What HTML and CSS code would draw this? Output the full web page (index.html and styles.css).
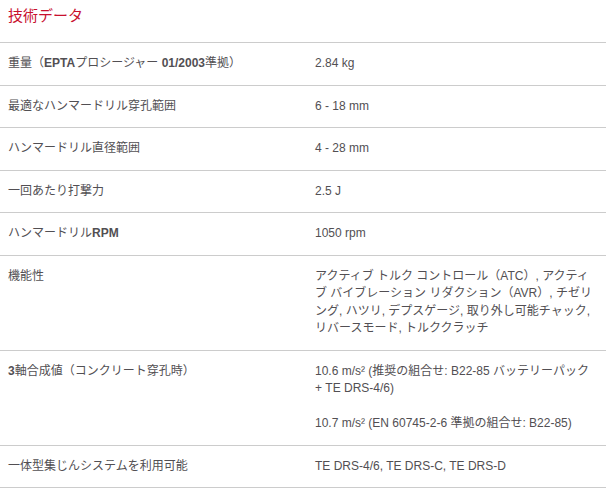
FILE: index.html
```html
<!DOCTYPE html>
<html lang="ja">
<head>
<meta charset="utf-8">
<title>技術データ</title>
<link rel="stylesheet" href="styles.css">
</head>
<body>
<h2 class="title">技術データ</h2>
<table class="specs">
  <tr><th>重量（<b>EPTA</b>プロシージャー <b>01/2003</b>準拠）</th><td>2.84 kg</td></tr>
  <tr><th>最適なハンマードリル穿孔範囲</th><td>6 - 18 mm</td></tr>
  <tr><th>ハンマードリル直径範囲</th><td>4 - 28 mm</td></tr>
  <tr><th>一回あたり打撃力</th><td>2.5 J</td></tr>
  <tr><th>ハンマードリル<b>RPM</b></th><td>1050 rpm</td></tr>
  <tr><th>機能性</th><td>アクティブ トルク コントロール（ATC）, アクティブ バイブレーション リダクション（AVR）, チゼリング, ハツリ, デプスゲージ, 取り外し可能チャック, リバースモード, トルククラッチ</td></tr>
  <tr><th><b>3</b>軸合成値（コンクリート穿孔時）</th><td>10.6 m/s² (推奨の組合せ: B22-85 バッテリーパック + TE DRS-4/6)<br><br>10.7 m/s² (EN 60745-2-6 準拠の組合せ: B22-85)</td></tr>
  <tr><th>一体型集じんシステムを利用可能</th><td>TE DRS-4/6, TE DRS-C, TE DRS-D</td></tr>
</table>
</body>
</html>
```
FILE: styles.css
```css
html, body {
  margin: 0;
  padding: 0;
  background: #ffffff;
}
body {
  font-family: "Liberation Sans", "Noto Sans CJK JP", sans-serif;
  color: #524f53;
  font-size: 12px;
}
.title {
  margin: 0;
  padding: 5px 8px 15px;
  font-size: 15px;
  line-height: 22px;
  font-weight: normal;
  color: #c8102e;
}
.specs {
  width: 100%;
  border-collapse: collapse;
  border-top: 1px solid #cccccc;
}
.specs tr {
  border-bottom: 1px solid #cccccc;
}
.specs th,
.specs td {
  width: 50%;
  line-height: 17.5px;
  text-align: left;
  vertical-align: top;
  font-weight: normal;
}
.specs th {
  padding: 12px 8px;
}
.specs td {
  padding: 12px 14px 12px 12px;
}
.specs b {
  font-weight: bold;
}
```
